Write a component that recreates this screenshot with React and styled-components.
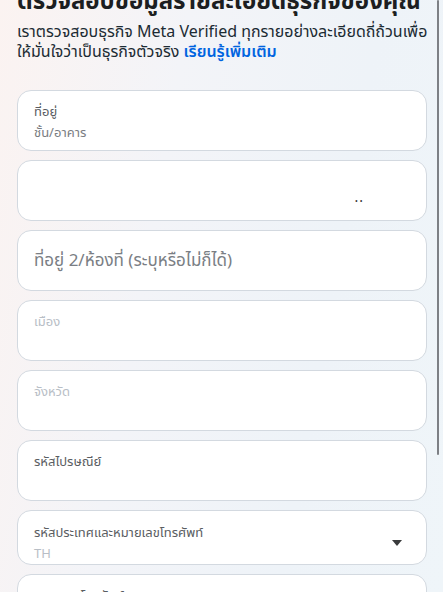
import React from "react";
import styled, { createGlobalStyle } from "styled-components";

const Global = createGlobalStyle`
  html, body {
    margin: 0;
    padding: 0;
    height: 100%;
    overflow: hidden;
  }
  body {
    font-family: "Noto Sans", "Noto Sans Thai", "DejaVu Sans", sans-serif;
    background: linear-gradient(100deg, #fbf3f1 0%, #f3f4f8 35%, #eef3f8 70%, #eff5f9 100%);
  }
`;

const Page = styled.div`
  position: relative;
  width: 443px;
  height: 592px;
  overflow: hidden;
  box-sizing: border-box;
  padding: 0 16px 0 17px;
`;

const Heading = styled.h1`
  margin: -17px 0 0;
  font-size: 24px;
  line-height: 34px;
  font-weight: 700;
  color: #1c1e21;
  white-space: nowrap;
`;

const Intro = styled.p`
  margin: 4px 0 0;
  font-size: 16px;
  line-height: 20px;
  color: #1c2b33;
  white-space: nowrap;
  a {
    color: #0064e0;
    font-weight: 600;
    text-decoration: none;
  }
`;

const Fields = styled.div`
  display: flex;
  flex-direction: column;
  gap: 9px;
  margin-top: 29px;
`;

const Field = styled.div`
  box-sizing: border-box;
  height: ${(p) => (p.short ? 55 : 61)}px;
  background: #fff;
  border: 1px solid #d3d9e0;
  border-radius: 14px;
  padding: ${(p) => (p.centered ? "0 16px" : "10px 16px 0")};
  display: flex;
  flex-direction: ${(p) => (p.row ? "row" : "column")};
  justify-content: ${(p) => (p.centered ? "center" : "flex-start")};
  align-items: ${(p) => (p.row ? "center" : "stretch")};
  position: relative;
`;

const Label = styled.span`
  font-size: 13px;
  line-height: 21px;
  color: ${(p) => (p.faint ? "#b8bec6" : "#5a5d62")};
`;

const Value = styled.span`
  font-size: 13px;
  line-height: 21px;
  color: #7a7d82;
`;

const Placeholder = styled.span`
  font-size: 17px;
  color: #7a7e84;
`;

const Dots = styled.span`
  position: absolute;
  right: 62px;
  bottom: 14px;
  font-size: 14px;
  color: #333;
  letter-spacing: 1px;
`;

const Stack = styled.div`
  display: flex;
  flex-direction: column;
  flex: 1;
`;

const Caret = styled.span`
  width: 0;
  height: 0;
  border-left: 5px solid transparent;
  border-right: 5px solid transparent;
  border-top: 6px solid #3a3b3c;
  margin-right: 8px;
`;

const Scrollbar = styled.div`
  position: absolute;
  top: 0;
  left: 437px;
  width: 2px;
  height: 455px;
  background: #7d8085;
  border-radius: 1px;
`;

export default function App() {
  return (
    <>
      <Global />
      <Page>
        <Heading>ตรวจสอบข้อมูลรายละเอียดธุรกิจของคุณ</Heading>
        <Intro>
          เราตรวจสอบธุรกิจ Meta Verified ทุกรายอย่างละเอียดถี่ถ้วนเพื่อ
          <br />
          ให้มั่นใจว่าเป็นธุรกิจตัวจริง <a href="#">เรียนรู้เพิ่มเติม</a>
        </Intro>
        <Fields>
          <Field>
            <Label>ที่อยู่</Label>
            <Value>ชั้น/อาคาร</Value>
          </Field>
          <Field>
            <Dots>..</Dots>
          </Field>
          <Field centered>
            <Placeholder>ที่อยู่ 2/ห้องที่ (ระบุหรือไม่ก็ได้)</Placeholder>
          </Field>
          <Field>
            <Label faint>เมือง</Label>
          </Field>
          <Field>
            <Label faint>จังหวัด</Label>
          </Field>
          <Field>
            <Label>รหัสไปรษณีย์</Label>
          </Field>
          <Field short row>
            <Stack>
              <Label>รหัสประเทศและหมายเลขโทรศัพท์</Label>
              <Label faint>TH</Label>
            </Stack>
            <Caret />
          </Field>
          <Field>
            <Label>หมายเลขโทรศัพท์</Label>
          </Field>
        </Fields>
        <Scrollbar />
      </Page>
    </>
  );
}
